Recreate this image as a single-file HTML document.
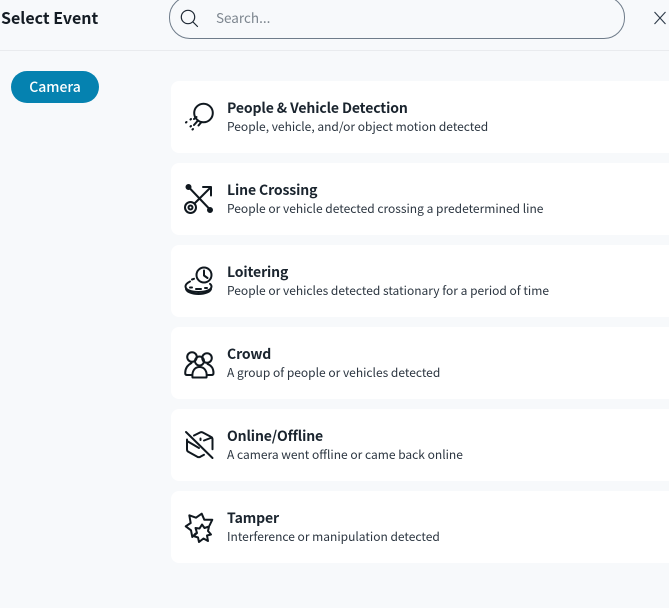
<!DOCTYPE html>
<html><head><meta charset="utf-8">
<style>
html,body{margin:0;padding:0}
body{width:669px;height:608px;background:#f7f9fb;position:relative;overflow:hidden;font-family:"Noto Sans CJK SC","Liberation Sans",sans-serif;color:#1d2733}
.t{position:absolute;white-space:nowrap}
.card{position:absolute;left:171px;width:498px;height:72px;background:#fff;border-radius:8px 0 0 8px}
.h{position:absolute;left:56px;top:17px;line-height:20px;white-space:nowrap;font-size:14px;font-weight:700;letter-spacing:-.12px;color:#1a242e}
.d{position:absolute;left:56px;top:37px;font-size:12px;line-height:18px;white-space:nowrap;color:#2b3540}
svg.i{position:absolute;left:12px;top:17px;width:34px;height:36px;fill:none;stroke:#10181f;stroke-width:2;stroke-linecap:round;stroke-linejoin:round}
</style></head><body>
<div class="t" style="left:1px;top:6px;font:700 16px/22px 'Noto Sans CJK SC','Liberation Sans',sans-serif;color:#141c24">Select Event</div>
<div style="position:absolute;left:169px;top:-4px;width:454px;height:41px;border:1px solid #6f7c8a;border-radius:21px"></div>
<svg style="position:absolute;left:178px;top:7px" width="22" height="22" fill="none" stroke="#1d2733" stroke-width="1.2" stroke-linecap="round"><circle cx="10" cy="10" r="6.700"/><path d="M15 15l4.500 4.500"/></svg>
<div class="t" style="left:216px;top:7px;font:400 13.500px/20px 'Noto Sans CJK SC','Liberation Sans',sans-serif;color:#7d868f">Search...</div>
<svg style="position:absolute;left:653px;top:10px" width="16" height="16" stroke="#2d3a48" stroke-width="1.100" fill="none"><path d="M1.500 2l11 12M12.500 2l-11 12"/></svg>
<div style="position:absolute;left:0;top:50px;width:669px;height:1px;background:#e9ebee"></div>
<div class="t" style="left:11px;top:71px;width:88px;height:32px;border-radius:16px;background:#0582b0;color:#fff;text-align:center;font:500 14px/32px 'Noto Sans CJK SC','Liberation Sans',sans-serif">Camera</div>

<div class="card" style="top:81px">
<svg class="i" viewBox="0 0 34 36"><circle cx="20.500" cy="15" r="9.300"/><path d="M13.500 19l-2.500 2M15 22.500l-4 4.500M18.500 24l-3 3.500M8 21l-.5.500M3.500 24l-.5.500M8 28l-.5.500M9.500 31.500l.5-.5"/></svg>
<div class="h">People &amp; Vehicle Detection</div>
<div class="d">People, vehicle, and/or object motion detected</div></div>

<div class="card" style="top:163px">
<svg class="i" viewBox="0 0 34 36"><circle cx="5.500" cy="7" r="2" fill="#10181f"/><circle cx="27" cy="30" r="2" fill="#10181f"/><circle cx="7.500" cy="27.500" r="5.500"/><circle cx="7.500" cy="27.500" r="2"/><path d="M7 8.500l19 20M11.500 23.500L28 7M20 7h8v8.500"/></svg>
<div class="h">Line Crossing</div>
<div class="d">People or vehicle detected crossing a predetermined line</div></div>

<div class="card" style="top:245px">
<svg class="i" viewBox="0 0 34 36"><circle cx="21" cy="13" r="7.500"/><path d="M21 8.500V13.500l3.500 2.500M7 19.500c-3 1.500-4.500 3-4.500 5 0 3.500 6 5.500 13 5.500s13-2 13-5.500c0-1-.5-1.800-1.500-2.600M3 27c1 3 6 5 12.500 5s11.500-2 12.500-5M9 17.500l2-.7M7 25.500h2M13 27h5M22 26h2"/></svg>
<div class="h">Loitering</div>
<div class="d">People or vehicles detected stationary for a period of time</div></div>

<div class="card" style="top:327px">
<svg class="i" viewBox="0 0 34 36"><circle cx="9" cy="13" r="4.800"/><circle cx="24" cy="14" r="4.800"/><circle cx="16.500" cy="17" r="4.500"/><path d="M9.500 31H4c-1.200 0-1.800-.8-1.800-2 0-5 2.500-8 6.300-10M24.500 20c4 1.500 6 4.500 6 9 0 1.500-.8 2-2 2H25M9.500 33.500c-.8-6 2-10.500 7-10.500s8 4.500 7 10.500z"/></svg>
<div class="h">Crowd</div>
<div class="d">A group of people or vehicles detected</div></div>

<div class="card" style="top:409px">
<svg class="i" viewBox="0 0 34 36"><path d="M3 6l26.500 26M11 9.500L17 6.500c1-.5 1.800-.5 2.800 0l8 4.300c1 .5 1.700 1.300 1.700 2.500v10M4 13.500v10c0 1 .4 1.800 1.300 2.300l9 5c1 .5 2 .5 3 0l3.700-2M4 15l12 7M21 14.500l8-3M17.500 12.500v1.500"/></svg>
<div class="h">Online/Offline</div>
<div class="d">A camera went offline or came back online</div></div>

<div class="card" style="top:491px">
<svg class="i" viewBox="0 0 34 36"><path d="M12.500 25.500L9.300 29 8 22.300 2.700 18.300 7.700 15 6.300 7.300 13 9.700 18.700 5.700 21.300 11.700 29.300 11.700 26.500 17.500M19 16.500l2.500 3.500 4.500-1.500-1 4.500 3 3.500-4 1 1 5.500-4.500-2.500-4.500 3.500-1-4.500-4.500-1.500 3.500-3-1.500-5 4 .5z"/></svg>
<div class="h">Tamper</div>
<div class="d">Interference or manipulation detected</div></div>
</body></html>
